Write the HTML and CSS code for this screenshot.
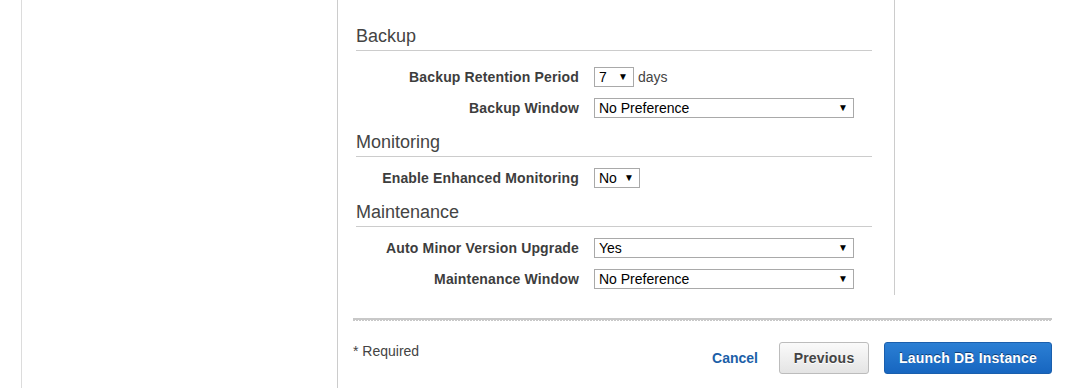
FILE: index.html
```html
<!DOCTYPE html>
<html lang="en">
<head>
    <meta charset="UTF-8">
    <title>Launch DB Instance - Configure Advanced Settings</title>
    <link rel="stylesheet" href="styles.css">
</head>
<body>
<div class="page">
    <div class="gutter"></div>
    <div class="sidebar"></div>

    <div class="main">
        <div class="form">
            <!-- Backup -->
            <section class="section">
                <h2 class="section-title">Backup</h2>
                <div class="fields fields-first">
                    <div class="field">
                        <label class="field-label">Backup Retention Period</label>
                        <div class="field-control">
                            <span class="select select-xs"><span>7</span><span class="arrow">&#9660;</span></span>
                            <span class="unit">days</span>
                        </div>
                    </div>
                    <div class="field">
                        <label class="field-label">Backup Window</label>
                        <div class="field-control">
                            <span class="select select-wide"><span>No Preference</span><span class="arrow">&#9660;</span></span>
                        </div>
                    </div>
                </div>
            </section>

            <!-- Monitoring -->
            <section class="section">
                <h2 class="section-title">Monitoring</h2>
                <div class="fields">
                    <div class="field">
                        <label class="field-label">Enable Enhanced Monitoring</label>
                        <div class="field-control">
                            <span class="select select-sm"><span>No</span><span class="arrow">&#9660;</span></span>
                        </div>
                    </div>
                </div>
            </section>

            <!-- Maintenance -->
            <section class="section">
                <h2 class="section-title">Maintenance</h2>
                <div class="fields">
                    <div class="field">
                        <label class="field-label">Auto Minor Version Upgrade</label>
                        <div class="field-control">
                            <span class="select select-wide"><span>Yes</span><span class="arrow">&#9660;</span></span>
                        </div>
                    </div>
                    <div class="field">
                        <label class="field-label">Maintenance Window</label>
                        <div class="field-control">
                            <span class="select select-wide"><span>No Preference</span><span class="arrow">&#9660;</span></span>
                        </div>
                    </div>
                </div>
            </section>
        </div>

        <div class="footer">
            <div class="footer-row">
                <span class="required">* Required</span>
                <div class="actions">
                    <a class="cancel" href="#">Cancel</a>
                    <button class="btn btn-default">Previous</button>
                    <button class="btn btn-primary">Launch DB Instance</button>
                </div>
            </div>
        </div>
    </div>
</div>
</body>
</html>
```

FILE: styles.css
```css
body, html {
    margin: 0;
    padding: 0;
    height: 100%;
    overflow: hidden;
    background: #fff;
    font-family: "Liberation Sans", Arial, sans-serif;
    color: #444;
}
.page {
    display: flex;
    height: 100%;
}
.gutter {
    width: 21px;
    border-right: 1px solid #dcdcdc;
}
.sidebar {
    width: 315px;
    border-right: 1px solid #cccccc;
}
.main {
    flex: 1;
    padding: 0 20px 0 15px;
}

/* form area */
.form {
    width: 516px;
    padding: 25px 22px 1px 3px;
    border-right: 1px solid #cccccc;
}
.section + .section {
    margin-top: 8px;
}
.section-title {
    margin: 0;
    font-size: 18px;
    line-height: 21px;
    font-weight: normal;
    color: #444;
    padding: 1px 0 3px;
    border-bottom: 1px solid #cccccc;
}
.fields {
    padding-top: 5px;
}
.fields-first {
    padding-top: 10px;
}
.field {
    display: grid;
    grid-template-columns: 223px 1fr;
    column-gap: 15px;
    align-items: center;
    height: 31px;
}
.field-label {
    text-align: right;
    font-size: 14px;
    font-weight: bold;
    letter-spacing: 0.15px;
    color: #3d3d3d;
}
.field-control {
    display: flex;
    align-items: center;
}

/* fake select boxes */
.select {
    display: inline-flex;
    align-items: center;
    justify-content: space-between;
    box-sizing: border-box;
    height: 20px;
    padding: 0 5px 0 4px;
    border: 1px solid #a9a9a9;
    font-size: 14px;
    color: #000;
    background: #fff;
}
.select .arrow {
    font-size: 10px;
    color: #000;
}
.select-xs {
    width: 40px;
}
.select-sm {
    width: 46px;
}
.select-wide {
    width: 260px;
}
.unit {
    margin-left: 4px;
    font-size: 14px;
    color: #444;
}

/* footer */
.footer {
    margin-top: 23px;
    border-top: 2px solid #c8c8c8;
}
.footer::before {
    content: '';
    display: block;
    height: 1px;
    background: repeating-linear-gradient(90deg, #c8c8c8 0 2px, transparent 2px 3px);
}
.footer-row {
    display: flex;
    align-items: flex-start;
    padding-top: 21px;
}
.required {
    font-size: 14px;
    line-height: 18px;
    color: #444;
}
.actions {
    margin-left: auto;
    display: flex;
    align-items: center;
}
.cancel {
    margin-right: 21px;
    font-size: 14px;
    font-weight: bold;
    color: #1c5fa8;
    text-decoration: none;
}
.btn {
    height: 32px;
    padding: 0;
    font-family: "Liberation Sans", Arial, sans-serif;
    font-size: 14px;
    font-weight: bold;
    letter-spacing: 0.2px;
    border-radius: 3px;
    cursor: pointer;
}
.btn-default {
    width: 90px;
    color: #444;
    background: linear-gradient(#fafafa, #e4e4e4);
    border: 1px solid #bcbcbc;
    text-shadow: 0 1px 0 #fff;
}
.btn-primary {
    width: 168px;
    margin-left: 15px;
    color: #fff;
    background: linear-gradient(#2b7fd4, #1766c0);
    border: 1px solid #1a5fad;
    text-shadow: 0 -1px 0 #0d3f7a;
}
```
